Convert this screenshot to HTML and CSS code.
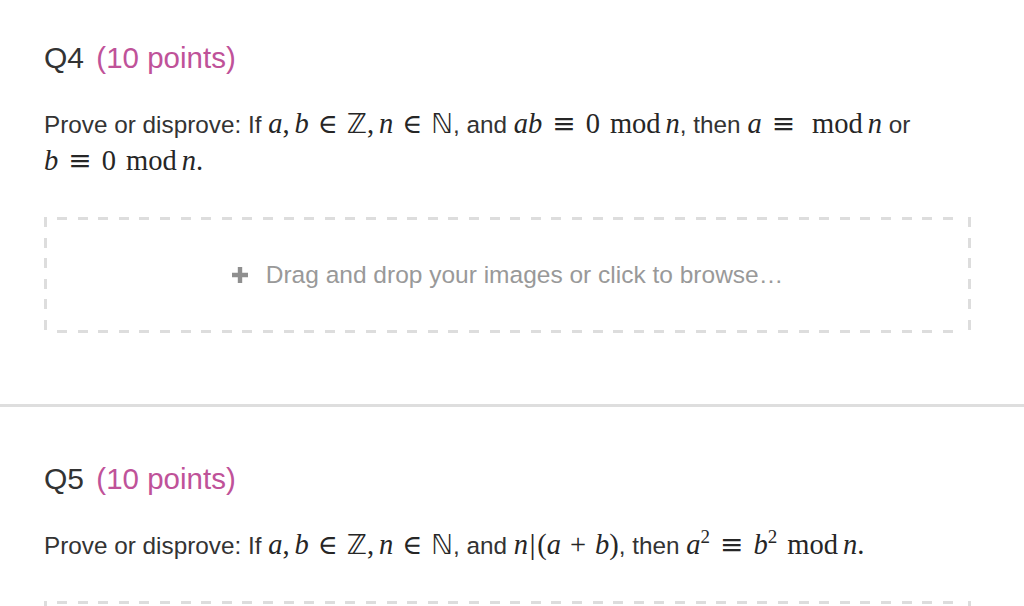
FILE: index.html
```html
<!DOCTYPE html>
<html lang="en">
<head>
<meta charset="utf-8">
<title>Quiz</title>
<link rel="stylesheet" href="styles.css">
</head>
<body>
<main class="page">
  <section class="question q-first">
    <h2 class="q-title">Q4 <span class="pts">(10 points)</span></h2>
    <p class="q-text">Prove or disprove: If <span class="m"><i>a</i>,<span class="th"></span><i>b</i><span class="rel in">∈</span><span class="bb">ℤ</span>,<span class="th"></span><i>n</i><span class="rel in">∈</span><span class="bb">ℕ</span></span>, and <span class="m"><i>ab</i><span class="rel">≡</span>0<span class="op">mod</span><i>n</i></span>, then <span class="m"><i>a</i><span class="rel">≡</span><span class="blank"></span><span class="op">mod</span><i>n</i></span> or <span class="m"><i>b</i><span class="rel">≡</span>0<span class="op">mod</span><i>n</i>.</span></p>
    <div class="dropzone">
      <svg class="plus" width="16" height="16" viewBox="0 0 16 16" aria-hidden="true"><path d="M5.8 0h4.4v5.8h5.8v4.4h-5.8v5.8h-4.4v-5.8h-5.8v-4.4h5.8z" fill="#8f8f8f"/></svg>
      <span class="drop-label">Drag and drop your images or click to browse…</span>
    </div>
  </section>
  <section class="question q-second">
    <h2 class="q-title">Q5 <span class="pts">(10 points)</span></h2>
    <p class="q-text">Prove or disprove: If <span class="m"><i>a</i>,<span class="th"></span><i>b</i><span class="rel in">∈</span><span class="bb">ℤ</span>,<span class="th"></span><i>n</i><span class="rel in">∈</span><span class="bb">ℕ</span></span>, and <span class="m"><i>n</i><span class="bar">|</span>(<i>a</i><span class="bin">+</span><i>b</i>)</span>, then <span class="m"><i>a</i><sup>2</sup><span class="rel">≡</span><i>b</i><sup>2</sup><span class="op">mod</span><i>n</i>.</span></p>
    <div class="dropzone">
      <svg class="plus" width="16" height="16" viewBox="0 0 16 16" aria-hidden="true"><path d="M5.8 0h4.4v5.8h5.8v4.4h-5.8v5.8h-4.4v-5.8h-5.8v-4.4h5.8z" fill="#8f8f8f"/></svg>
      <span class="drop-label">Drag and drop your images or click to browse…</span>
    </div>
  </section>
</main>
</body>
</html>
```

FILE: styles.css
```css
html, body {
  margin: 0;
  padding: 0;
  background: #fff;
}

body {
  font-family: "Liberation Sans", Arial, sans-serif;
  color: #333;
  overflow: hidden;
}

.page {
  display: flex;
  flex-direction: column;
}

.question {
  padding: 0 53px 71px 44px;
  border-bottom: 3px solid #dedede;
}

.q-first {
  padding-top: 40px;
}

.q-second {
  padding-top: 54px;
}

.q-title {
  margin: 0;
  font-size: 30px;
  line-height: 36px;
  font-weight: normal;
  color: #333;
}

.pts {
  margin-left: 4px;
  font-size: 29.5px;
  color: #bf5299;
}

.q-text {
  margin: 30px 0 0;
  font-size: 24.3px;
  line-height: 37px;
  color: #333;
}

.m {
  font-family: "Liberation Serif", "Times New Roman", serif;
  font-size: 28.5px;
  line-height: 1;
  white-space: nowrap;
  color: #262626;
}

.m i {
  font-style: italic;
}

.m sup {
  font-size: 19px;
  line-height: 0;
  vertical-align: 0;
  position: relative;
  top: -11px;
  margin-left: 0;
}

.th {
  display: inline-block;
  width: 5px;
}

.rel {
  display: inline-block;
  margin: 0 10px;
  font-family: "DejaVu Serif", "Liberation Serif", serif;
  font-size: 28px;
}

.rel.in {
  margin: 0 9px;
  font-size: 27px;
}

.bin {
  display: inline-block;
  margin: 0 9px;
}

.bb {
  font-family: "DejaVu Sans", sans-serif;
  font-size: 27px;
}

.op {
  display: inline-block;
  margin: 0 5px 0 10px;
}

.bar {
  display: inline-block;
  margin: 0 1px;
  font-family: "Liberation Sans", sans-serif;
  font-size: 28px;
  transform: scaleX(0.7);
}

.blank {
  display: inline-block;
  width: 0;
  margin-left: -3px;
}

.dropzone {
  margin-top: 37px;
  height: 116px;
  box-sizing: border-box;
  display: flex;
  align-items: center;
  justify-content: center;
  gap: 18px;
  color: #999;
  font-size: 24.5px;
  background:
    repeating-linear-gradient(90deg, #dddddd 0 10px, transparent 10px 20.6px) 13px 0 / calc(100% - 26px) 3px no-repeat,
    repeating-linear-gradient(90deg, #dddddd 0 10px, transparent 10px 20.6px) 13px 100% / calc(100% - 26px) 3px no-repeat,
    repeating-linear-gradient(180deg, #dddddd 0 10px, transparent 10px 20.6px) 0 0 / 3px 100% no-repeat,
    repeating-linear-gradient(180deg, #dddddd 0 10px, transparent 10px 20.6px) 100% 0 / 3px 100% no-repeat;
}

.plus {
  flex: none;
}

.drop-label {
  color: #999;
}
```
